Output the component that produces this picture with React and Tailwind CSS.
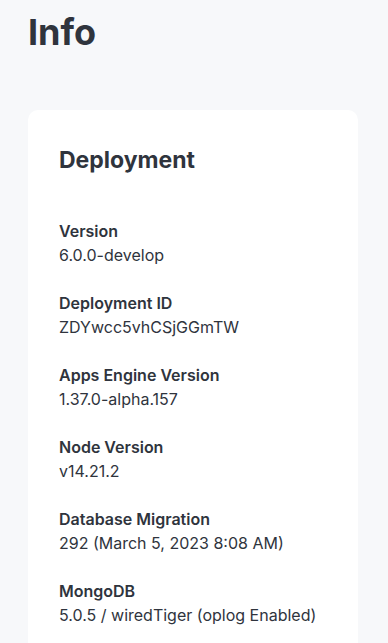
import React from "react";

const items = [
  { label: "Version", value: "6.0.0-develop" },
  { label: "Deployment ID", value: "ZDYwcc5vhCSjGGmTW" },
  { label: "Apps Engine Version", value: "1.37.0-alpha.157" },
  { label: "Node Version", value: "v14.21.2" },
  { label: "Database Migration", value: "292 (March 5, 2023 8:08 AM)" },
  { label: "MongoDB", value: "5.0.5 / wiredTiger (oplog Enabled)" },
];

export default function App() {
  return (
    <div
      className="h-[643px] overflow-hidden bg-[#f7f8fa] text-[#2f343d]"
      style={{ fontFamily: "Inter, 'Noto Sans', sans-serif" }}
    >
      <h1 className="px-[28px] pt-[10px] text-[36px] font-bold leading-[44px]">Info</h1>

      <div className="ml-[28px] mt-[56px] w-[330px] rounded-[10px] bg-white px-[31px] pt-[34px] pb-8">
        <h2 className="text-[23px] font-bold leading-[32px]">Deployment</h2>

        <div className="mt-[43px] flex flex-col gap-[24px]">
          {items.map((item) => (
            <div key={item.label} className="flex flex-col">
              <span className="text-[16px] font-semibold leading-[24px]">{item.label}</span>
              <span className="text-[16px] leading-[24px]">{item.value}</span>
            </div>
          ))}
        </div>
      </div>
    </div>
  );
}
